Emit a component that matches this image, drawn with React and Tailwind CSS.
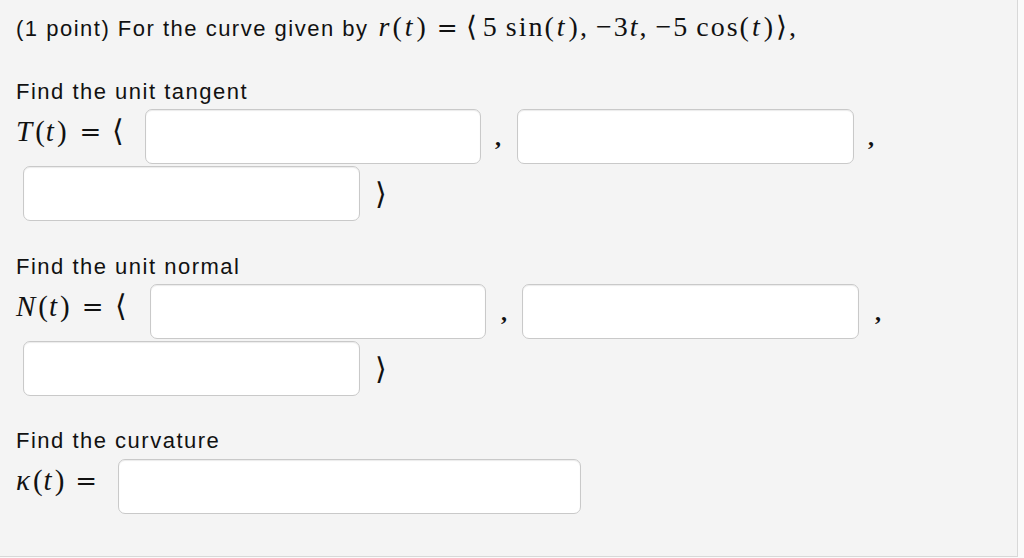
import React from "react";

const sans = "font-['Liberation_Sans',Arial,sans-serif]";
const serif = "font-['Liberation_Serif','Times_New_Roman',serif]";
const sym = "font-['DejaVu_Serif',serif]";
const delim = "font-['DejaVu_Sans',sans-serif] font-extralight";

function Box({ className = "" }) {
  return (
    <div
      className={`h-[55px] bg-white border border-[#c9c9c9] rounded-[7px] shadow-[inset_0_1px_1px_rgba(0,0,0,0.08)] ${className}`}
    />
  );
}

function Comma({ className = "" }) {
  return (
    <span className={`${serif} text-[24px] leading-none font-bold mt-[16px] ${className}`}>,</span>
  );
}

// T(t) = ⟨  /  N(t) = ⟨  /  κ(t) =
function Label({ v, open = true, width, vItalic = true, eqGap = "ml-[13px]" }) {
  return (
    <div className={`${serif} text-[29px] leading-[29px] flex items-baseline shrink-0 mt-[7px] ${width}`}>
      <span className={vItalic ? "italic" : ""}>{v}</span>
      <span className="ml-[3px]">(</span>
      <span className="italic ml-[1px]">t</span>
      <span className="ml-[3px]">)</span>
      <span className={`${sym} text-[26px] ${eqGap}`}>=</span>
      {open && <span className={`${delim} text-[30px] ml-[11px]`}>⟨</span>}
    </div>
  );
}

function Close() {
  return <span className={`${delim} text-[30px] leading-none ml-[15px] self-center`}>⟩</span>;
}

function VectorRow({ v, labelW, gap, eqGap, tail }) {
  return (
    <div>
      <div className="flex items-start mt-[3px]">
        <Label v={v} width={labelW} eqGap={eqGap} />
        <Box className="w-[336px]" />
        <Comma className={gap} />
        <Box className="w-[337px]" />
        <Comma className={tail} />
      </div>
      <div className="flex items-start mt-[2px]">
        <Box className="w-[337px] ml-[7px] h-[54px]" />
        <Close />
      </div>
    </div>
  );
}

export default function App() {
  return (
    <div className="w-[1024px] h-[558px] bg-[#fafafa]">
      <div className={`w-[1018px] h-[557px] bg-[#f4f4f4] border-r border-b border-[#d8d8d8] pl-[16px] pt-[13px] text-[#111] ${sans}`}>
        {/* question */}
        <div className="flex items-baseline h-[31px] text-[22px] leading-[28px] tracking-[1.5px] whitespace-nowrap">
          <span>(1 point) For the curve given by</span>
          <span className={`${serif} text-[28px] leading-none tracking-[2px] ml-[10px] flex items-baseline`}>
            <span className="italic">r</span>
            <span className="ml-[1px]">(</span>
            <span className="italic ml-[1px]">t</span>
            <span className="ml-[2px]">)</span>
            <span className={`${sym} text-[25px] ml-[9px]`}>=</span>
            <span className={`${delim} text-[28px] ml-[6px]`}>⟨</span>
            <span className="ml-[4px]">5</span>
            <span className="ml-[7px]">sin(</span>
            <span className="italic ml-[1px]">t</span>
            <span className="ml-[2px]">),</span>
            <span className="ml-[7px]">−3</span>
            <span className="italic">t</span>
            <span>,</span>
            <span className="ml-[7px]">−5</span>
            <span className="ml-[7px]">cos(</span>
            <span className="italic ml-[1px]">t</span>
            <span className="ml-[2px]">)</span>
            <span className={`${delim} text-[28px] ml-[1px]`}>⟩</span>
            <span>,</span>
          </span>
        </div>

        {/* unit tangent */}
        <p className="text-[22px] leading-[28px] tracking-[1.5px] mt-[34px]">Find the unit tangent</p>
        <VectorRow v="T" labelW="w-[129px]" gap="ml-[14px] mr-[16px]" eqGap="ml-[13px]" tail="ml-[14px]" />

        {/* unit normal */}
        <p className="text-[22px] leading-[28px] tracking-[1.5px] mt-[32px]">Find the unit normal</p>
        <VectorRow v="N" labelW="w-[134px]" gap="ml-[15px] mr-[15px]" eqGap="ml-[12px]" tail="ml-[16px]" />

        {/* curvature */}
        <p className="text-[22px] leading-[28px] tracking-[1.5px] mt-[31px]">Find the curvature</p>
        <div className="flex items-start mt-[4px]">
          <Label v="κ" open={false} width="w-[102px]" vItalic={true} eqGap="ml-[11px]" />
          <Box className="w-[463px] h-[54px]" />
        </div>
      </div>
    </div>
  );
}
